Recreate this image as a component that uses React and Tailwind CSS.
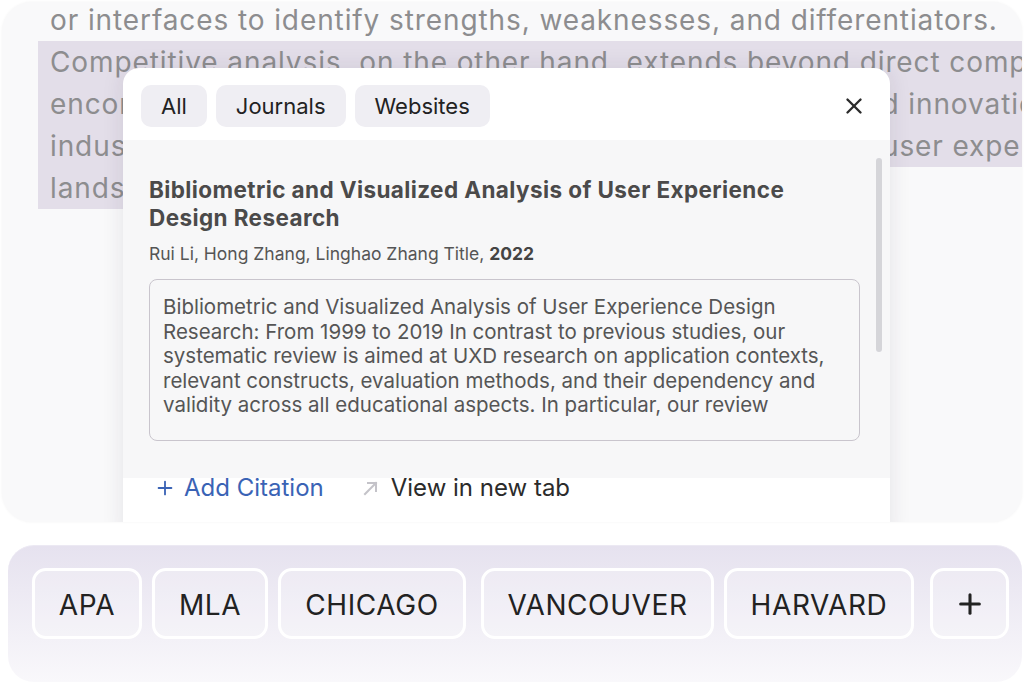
import React from 'react';
import { X, Plus } from 'lucide-react';

const bodyFont = { fontFamily: 'Inter, "Liberation Sans", Arial, sans-serif' };

const lines = [
  { text: 'or interfaces to identify strengths, weaknesses, and differentiators.', hl: '' },
  { text: 'Competitive analysis, on the other hand, extends beyond direct competitors to', hl: 'w-full' },
  { text: 'encompasses the broad industry landscape, key trends, and innovations', hl: 'w-full' },
  { text: 'industry benchmarks, design patterns, and major trends in user experience', hl: 'w-full' },
  { text: 'landscape to reveal opportunities for differentiation.', hl: 'w-[600px]' },
];

const abstractLines = [
  'Bibliometric and Visualized Analysis of User Experience Design',
  'Research: From 1999 to 2019 In contrast to previous studies, our',
  'systematic review is aimed at UXD research on application contexts,',
  'relevant constructs, evaluation methods, and their dependency and',
  'validity across all educational aspects. In particular, our review',
  'focuses on the quality of evidence.',
];

const styles = [
  { label: 'APA', w: 'w-[110px]', ml: '' },
  { label: 'MLA', w: 'w-[116px]', ml: 'ml-[10px]' },
  { label: 'CHICAGO', w: 'w-[188px]', ml: 'ml-[10px]' },
  { label: 'VANCOUVER', w: 'w-[233px]', ml: 'ml-[15px]' },
  { label: 'HARVARD', w: 'w-[190px]', ml: 'ml-[10px]' },
];

function ArrowUpRight() {
  return (
    <svg width="18" height="18" viewBox="0 0 18 18" fill="none" stroke="#c4c3c9" strokeWidth="2" strokeLinecap="square">
      <path d="M3 15 L14 4" />
      <path d="M6 4 H14 V12" />
    </svg>
  );
}

export default function App() {
  return (
    <div className="w-[1024px] h-[682px] bg-white overflow-hidden" style={bodyFont}>
      {/* document card */}
      <div className="relative ml-[2px] mt-[2px] w-[1020px] h-[520px] rounded-[30px] bg-[#f9f9fa] overflow-hidden shadow-[0_0_3px_rgba(0,0,0,0.05)]">
        <div className="-mt-[3px] text-[28px] leading-[42px] tracking-[0.9px] text-[#8d8d8f]">
          {lines.map((l, i) => (
            <div key={i} className="h-[42px] flex">
              <div className={`whitespace-nowrap pl-[12px] ml-[36px] ${l.hl ? 'bg-[#e3dee9]' : ''} ${l.hl}`}>{l.text}</div>
            </div>
          ))}
        </div>

        {/* source popover */}
        <div className="absolute left-[121px] top-[66px] w-[767px] h-[470px] bg-white rounded-t-[16px] shadow-[0_0_22px_rgba(40,30,60,0.10)] flex flex-col overflow-hidden">
          <div className="h-[72px] shrink-0 flex items-center pl-[18px] pr-[23px] pt-[4px]">
            <div className="flex gap-[9px]">
              {['All', 'Journals', 'Websites'].map(c => (
                <div key={c} className="h-[42px] px-[20px] rounded-[10px] bg-[#efeef3] text-[22px] text-[#222] flex items-center">{c}</div>
              ))}
            </div>
            <X className="ml-auto w-[26px] h-[26px] text-[#2b2b2b]" strokeWidth={2.2} />
          </div>

          <div className="relative h-[338px] shrink-0 bg-[#f7f7f8] pl-[26px] pr-[30px] pt-[36px]">
            <div className="text-[22.5px] leading-[28px] tracking-[0.4px] font-bold text-[#4b4a4a] pr-[40px]">
              Bibliometric and Visualized Analysis of User Experience Design Research
            </div>
            <div className="mt-[10px] text-[17.5px] leading-[24px] text-[#555]">
              Rui Li, Hong Zhang, Linghao Zhang Title, <span className="font-bold text-[#444]">2022</span>
            </div>
            <div className="mt-[13px] h-[162px] rounded-[8px] border-[1.5px] border-[#c9c5cd] pl-[13px] pr-[12px] pt-[15px] overflow-hidden">
              <div className="h-[125px] overflow-hidden text-[20.5px] leading-[24.5px] text-[#555]">
                {abstractLines.map(t => (
                  <div key={t} className="whitespace-nowrap">{t}</div>
                ))}
              </div>
            </div>
            <div className="absolute right-[8px] top-[18px] w-[6px] h-[194px] rounded-full bg-[#d5d5d9]" />
          </div>

          <div className="flex items-start pl-[31px] -mt-[2px] h-[60px]">
            <div className="flex items-center text-[#3a63b5] text-[24px] leading-[24px]">
              <Plus className="w-[22px] h-[22px] mr-[8px]" strokeWidth={2} />
              <span>Add Citation</span>
            </div>
            <div className="flex items-center ml-[38px] text-[24px] leading-[24px] text-[#2b2b2b]">
              <ArrowUpRight />
              <span className="ml-[11px]">View in new tab</span>
            </div>
          </div>
        </div>
      </div>

      {/* citation style bar */}
      <div className="ml-[8px] mt-[23px] w-[1014px] h-[137px] rounded-[26px] bg-gradient-to-b from-[#e6e2ef] to-[#f9f8fb] border-t border-[#ece9f3] pl-[24px] pt-[22px]">
        <div className="flex">
          {styles.map(s => (
            <div key={s.label} className={`${s.w} ${s.ml} h-[71px] pt-[3px] rounded-[14px] border-[3px] border-white bg-white/20 flex items-center justify-center text-[28px] tracking-[0.6px] text-[#222]`}>
              {s.label}
            </div>
          ))}
          <div className="w-[79px] ml-[16px] h-[71px] rounded-[14px] border-[3px] border-white bg-white/20 flex items-center justify-center">
            <Plus className="w-[32px] h-[32px] text-[#222]" strokeWidth={2.3} />
          </div>
        </div>
      </div>
    </div>
  );
}
